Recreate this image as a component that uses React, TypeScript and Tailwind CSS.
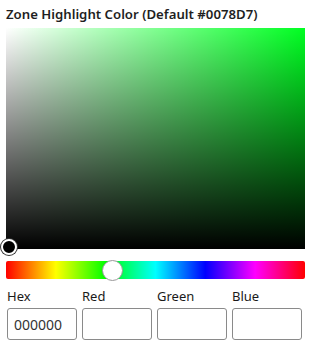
import React from "react";

const font = { fontFamily: '"Noto Sans", "Open Sans", sans-serif' };

function Field({ label, value }: { label: string; value?: string }) {
  return (
    <div className="flex flex-col w-[70px]">
      <div className="text-[13px] leading-[18px] text-[#1a1a1a] h-[20px]">{label}</div>
      <div className="mt-[1px] h-[32px] w-[70px] rounded-[3px] border border-[#8a8a8a] bg-white flex items-center pl-[6px] text-[14px] text-[#333]">
        {value}
      </div>
    </div>
  );
}

export default function App() {
  return (
    <div className="w-[321px] h-[347px] bg-white overflow-hidden relative" style={font}>
      <div className="pl-[6px] pt-[5px] text-[13.2px] leading-[19px] font-semibold text-[#1f1f1f]">
        Zone Highlight Color (Default #0078D7)
      </div>
      <div className="ml-[6px] mt-[4px] relative w-[299px] h-[221px] bg-[#00ff22]">
        <div className="absolute inset-0 bg-gradient-to-r from-white to-transparent" />
        <div className="absolute inset-0 bg-gradient-to-b from-transparent to-black" />
        <div className="absolute left-[-5px] top-[211px] w-[16px] h-[16px] rounded-full bg-black border-[2px] border-white ring-1 ring-[#333]" />
      </div>
      <div
        className="ml-[6px] mt-[12px] relative w-[299px] h-[18px] rounded-[2px]"
        style={{
          background:
            "linear-gradient(to right, #ff0000 0%, #ffff00 16.66%, #00ff00 33.33%, #00ffff 50%, #0000ff 66.66%, #ff00ff 83.33%, #ff0000 100%)",
        }}
      >
        <div className="absolute left-[96px] top-[-1.5px] w-[21px] h-[21px] rounded-full bg-white border border-[#999]" />
      </div>
      <div className="ml-[7px] mt-[8px] flex gap-[5px]">
        <Field label="Hex" value="000000" />
        <Field label="Red" />
        <Field label="Green" />
        <Field label="Blue" />
      </div>
    </div>
  );
}
